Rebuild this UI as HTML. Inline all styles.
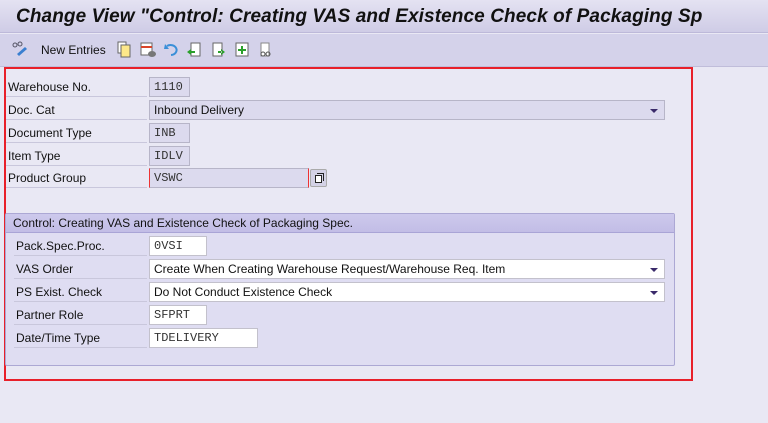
<!DOCTYPE html>
<html><head><style>
*{margin:0;padding:0;box-sizing:border-box}
body{width:768px;height:423px;background:#e9e8f4;font-family:"Liberation Sans",sans-serif;font-size:12px;color:#111;position:relative;overflow:hidden}
.title{position:absolute;left:0;top:0;width:768px;height:33px;background:linear-gradient(#e4e2f2,#cfcce6);border-bottom:1px solid #bdb9d9}
.title span{position:absolute;left:16px;top:6px;font-size:19px;font-weight:bold;font-style:italic;color:#111;letter-spacing:0.1px}
.tb{position:absolute;left:0;top:34px;width:768px;height:33px;background:#d4d2ea;border-bottom:1px solid #c0bdda}
.red{position:absolute;left:4px;top:67px;width:689px;height:314px;border:2px solid #e8202a}
.lab{position:absolute;left:6px;width:141px;height:21px;border-bottom:1px solid #c9c7dc;line-height:22px;padding-left:2px}
.fld{position:absolute;height:20px;border:1px solid #b7b5c8;background:#dcdaee;font-family:"Liberation Mono",monospace;font-size:12px;line-height:18px;padding-left:4px;color:#333}
.w{background:#fff;border-color:#c3c1cc}
.dd{font-family:"Liberation Sans",sans-serif;color:#111}
.dd:after{content:"";position:absolute;right:6px;top:8px;border-left:4px solid transparent;border-right:4px solid transparent;border-top:4px solid #3a2a6a}
.grp{position:absolute;left:5px;top:213px;width:670px;height:153px;border:1px solid #aca8d4;background:#dfddf2;border-radius:2px}
.gh{height:19px;background:linear-gradient(#cdc9ec,#c2bde6);border-bottom:1px solid #a9a4d6;padding-left:7px;line-height:19px}
</style></head><body>
<div class="title"><span>Change View "Control: Creating VAS and Existence Check of Packaging Sp</span></div>
<div class="tb">
<svg style="position:absolute;left:11px;top:7px" width="18" height="16"><circle cx="4" cy="4" r="2" fill="none" stroke="#556" stroke-width="1"/><circle cx="9" cy="3" r="2" fill="none" stroke="#556"/><path d="M6 13 L14 6 L16 8 L8 15Z" fill="#3a7fd0"/></svg>
<span style="position:absolute;left:41px;top:9px">New Entries</span>
<svg style="position:absolute;left:117px;top:7px" width="160" height="18">
<rect x="1" y="1" width="8" height="11" fill="#fff" stroke="#666"/><rect x="4" y="4" width="9" height="12" fill="#fde88a" stroke="#666"/>
<rect x="24" y="2" width="11" height="12" fill="#fff" stroke="#666"/><rect x="24" y="5" width="11" height="2" fill="#d9452a"/><ellipse cx="35" cy="13" rx="4" ry="3" fill="#777"/>
<path d="M50 5 a6 5 0 1 1 4 9" fill="none" stroke="#3a8fd8" stroke-width="2"/><path d="M48 3 l4 5 h-5z" fill="#3a8fd8"/>
<rect x="74" y="2" width="9" height="13" fill="#fff" stroke="#666"/><path d="M70 11 l4-3 v6z M73 10 h5 v2 h-5z" fill="#2aa02a"/>
<rect x="96" y="2" width="9" height="13" fill="#fff" stroke="#666"/><path d="M108 11 l-4-3 v6z M101 10 h4 v2 h-4z" fill="#2aa02a"/>
<rect x="119" y="2" width="12" height="13" fill="#fff" stroke="#666"/><path d="M121 9 h8 M125 5 v8" stroke="#2aa02a" stroke-width="2"/>
<rect x="144" y="2" width="8" height="13" fill="#fff" stroke="#888"/><circle cx="146" cy="13" r="2" fill="none" stroke="#555"/><circle cx="151" cy="13" r="2" fill="none" stroke="#555"/>
</svg>
</div>
<div class="red"></div>
<div class="lab" style="top:76px">Warehouse No.</div><div class="fld" style="left:149px;top:77px;width:41px">1110</div>
<div class="lab" style="top:99px">Doc. Cat</div><div class="fld dd" style="left:149px;top:100px;width:516px">Inbound Delivery</div>
<div class="lab" style="top:122px">Document Type</div><div class="fld" style="left:149px;top:123px;width:41px">INB</div>
<div class="lab" style="top:145px">Item Type</div><div class="fld" style="left:149px;top:146px;width:41px">IDLV</div>
<div class="lab" style="top:167px">Product Group</div><div class="fld" style="left:149px;top:168px;width:160px;border-left:1px solid #e33;border-right:1px solid #e33">VSWC</div>
<div style="position:absolute;left:310px;top:169px;width:17px;height:18px;background:#d4d2e6;border:1px solid #aaa;border-radius:2px"><div style="position:absolute;left:4px;top:5px;width:7px;height:8px;border:1px solid #222;background:#fff"></div><div style="position:absolute;left:6px;top:3px;width:7px;height:8px;border-top:1px solid #222;border-right:1px solid #222"></div></div>
<div class="grp"><div class="gh">Control: Creating VAS and Existence Check of Packaging Spec.</div></div>
<div class="lab" style="top:235px;left:14px;width:133px">Pack.Spec.Proc.</div><div class="fld w" style="left:149px;top:236px;width:58px">0VSI</div>
<div class="lab" style="top:258px;left:14px;width:133px">VAS Order</div><div class="fld w dd" style="left:149px;top:259px;width:516px">Create When Creating Warehouse Request/Warehouse Req. Item</div>
<div class="lab" style="top:281px;left:14px;width:133px">PS Exist. Check</div><div class="fld w dd" style="left:149px;top:282px;width:516px">Do Not Conduct Existence Check</div>
<div class="lab" style="top:304px;left:14px;width:133px">Partner Role</div><div class="fld w" style="left:149px;top:305px;width:58px">SFPRT</div>
<div class="lab" style="top:327px;left:14px;width:133px">Date/Time Type</div><div class="fld w" style="left:149px;top:328px;width:109px">TDELIVERY</div>
</body></html>
